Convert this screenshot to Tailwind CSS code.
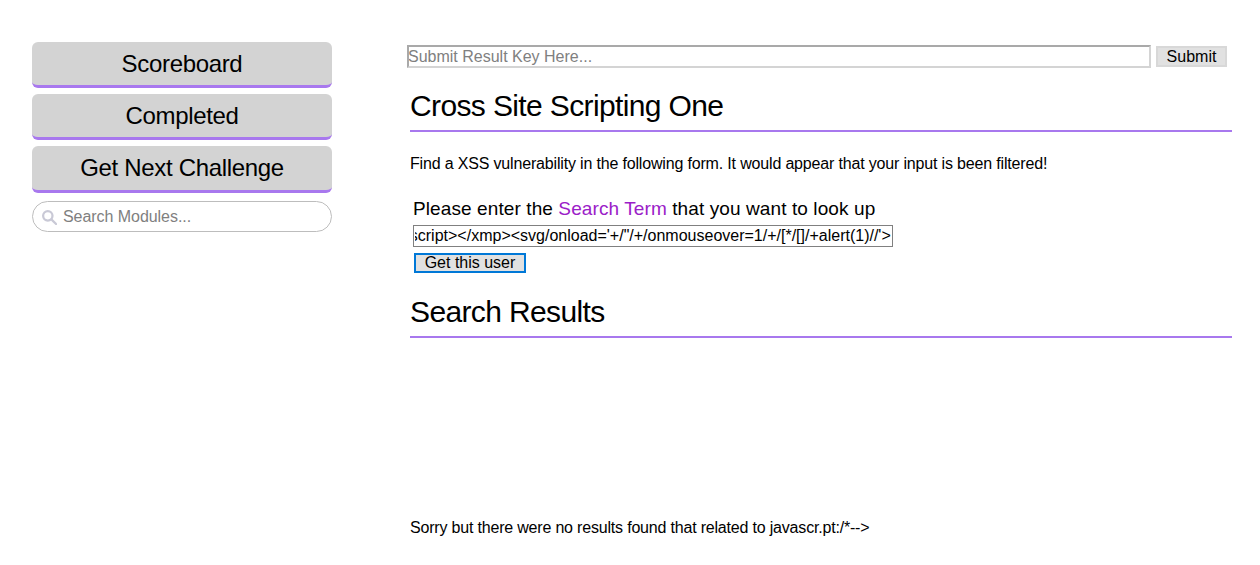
<!DOCTYPE html>
<html lang="en">
<head>
  <meta charset="UTF-8">
  <title>Cross Site Scripting One</title>
  <script src="https://cdn.jsdelivr.net/npm/@tailwindcss/browser@4"></script>
</head>
<body class="bg-white text-black font-['Liberation_Sans',Arial,sans-serif] h-[565px] overflow-hidden">
  <div class="flex">
    <!-- sidebar -->
    <div class="w-[300px] ml-[32px] mt-[42px] flex flex-col">
      <a class="h-[46px] bg-[#d3d3d3] rounded-[6px] border-b-[3px] border-[#a878ee] text-[24px] tracking-[-0.33px] flex items-center justify-center pt-[1px]">Scoreboard</a>
      <a class="h-[46px] mt-[6px] bg-[#d3d3d3] rounded-[6px] border-b-[3px] border-[#a878ee] text-[24px] tracking-[-0.33px] flex items-center justify-center">Completed</a>
      <a class="h-[47px] mt-[6px] bg-[#d3d3d3] rounded-[6px] border-b-[3px] border-[#a878ee] text-[24px] tracking-[-0.33px] flex items-center justify-center pb-[1px]">Get Next Challenge</a>
      <div class="h-[31px] mt-[8px] rounded-full border border-[#bdbdbd] flex items-center pl-[9px]">
        <svg class="w-[15px] h-[15px] shrink-0 mt-px" viewBox="0 0 16 16" fill="none" stroke="#c9c9d6" stroke-width="2.4">
          <circle cx="6.2" cy="6.2" r="5"></circle>
          <path d="M10 10l5 5" stroke-linecap="round"></path>
        </svg>
        <input class="ml-[6px] w-[240px] text-[16px] tracking-[-0.05px] outline-none placeholder:text-[#808080]" placeholder="Search Modules...">
      </div>
    </div>

    <!-- main -->
    <div class="ml-[75px] w-[825px] mt-[45px]">
      <div class="flex items-center">
        <input class="w-[744px] h-[23px] border-2 border-t-[#a9a9a9] border-l-[#a9a9a9] border-r-[#d4d4d4] border-b-[#d4d4d4] px-0 indent-[-1px] text-[16px] outline-none placeholder:text-[#808080]" placeholder="Submit Result Key Here...">
        <button class="ml-[5px] w-[71px] h-[21px] bg-[#e1e1e1] border-2 border-[#d8d8d8] text-[16px] flex items-center justify-center">Submit</button>
      </div>

      <div class="ml-[3px]">
        <h1 class="text-[30px] leading-[36px] mt-[20px] pb-[6px] border-b-2 border-[#a878ee] tracking-[-0.63px]">Cross Site Scripting One</h1>
        <p class="text-[16px] leading-[18px] mt-[23px] tracking-[-0.17px]">Find a XSS vulnerability in the following form. It would appear that your input is been filtered!</p>

        <form class="ml-[3px] mt-[25px]">
          <p class="text-[19px] leading-[22px] tracking-[0.1px]">Please enter the <span class="text-[#9b20c8]">Search Term</span> that you want to look up</p>
          <input id="term" class="block w-[480px] h-[22px] mt-[5px] border border-[#808080] px-px text-[16px] outline-none" value="&lt;/script&gt;&lt;/xmp&gt;&lt;svg/onload='+/&quot;/+/onmouseover=1/+/[*/[]/+alert(1)//'&gt;">
          <button type="button" class="block mt-[6px] ml-px w-[112px] h-[20px] bg-[#e1e1e1] border-2 border-[#0078d7] text-[16px] leading-[16px]">Get this user</button>
        </form>

        <h1 class="text-[30px] leading-[36px] mt-[21px] pb-[6px] border-b-2 border-[#a878ee] tracking-[-0.63px]">Search Results</h1>
        <p class="text-[16px] leading-[18px] mt-[181px] tracking-[-0.19px]">Sorry but there were no results found that related to javascr.pt:/*--&gt;</p>
      </div>
    </div>
  </div>

  <script>
    // the reference has the field scrolled to the end of its value
    const term = document.getElementById('term');
    term.scrollLeft = term.scrollWidth;
  </script>
</body>
</html>
